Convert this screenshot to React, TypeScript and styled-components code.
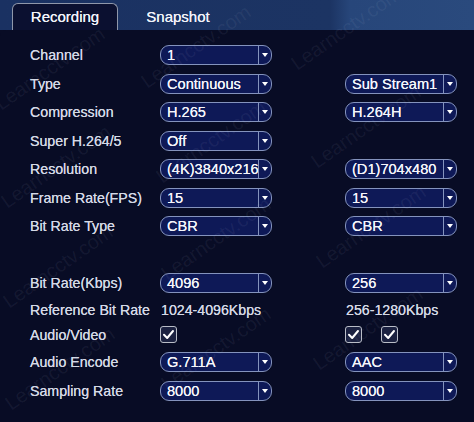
import React from "react";
import styled, { createGlobalStyle } from "styled-components";

const GlobalStyle = createGlobalStyle`
  html, body {
    margin: 0;
    padding: 0;
    background: #080c25;
  }
  * {
    box-sizing: border-box;
  }
`;

interface FieldRow {
   label?: string;
   left?: Control;
   right?: Control;
   h: number;
}

type Control =
   | { kind: "select"; value: string }
   | { kind: "text"; value: string }
   | { kind: "checks"; count: number };

const rows: FieldRow[] = [
   { label: "Channel", left: { kind: "select", value: "1" }, h: 28.5 },
   { label: "Type", left: { kind: "select", value: "Continuous" }, right: { kind: "select", value: "Sub Stream1" }, h: 28.5 },
   { label: "Compression", left: { kind: "select", value: "H.265" }, right: { kind: "select", value: "H.264H" }, h: 28.5 },
   { label: "Super H.264/5", left: { kind: "select", value: "Off" }, h: 28.5 },
   { label: "Resolution", left: { kind: "select", value: "(4K)3840x2160" }, right: { kind: "select", value: "(D1)704x480" }, h: 28.5 },
   { label: "Frame Rate(FPS)", left: { kind: "select", value: "15" }, right: { kind: "select", value: "15" }, h: 28.5 },
   { label: "Bit Rate Type", left: { kind: "select", value: "CBR" }, right: { kind: "select", value: "CBR" }, h: 28.5 },
   { h: 28.5 },
   { label: "Bit Rate(Kbps)", left: { kind: "select", value: "4096" }, right: { kind: "select", value: "256" }, h: 28.5 },
   { label: "Reference Bit Rate", left: { kind: "text", value: "1024-4096Kbps" }, right: { kind: "text", value: "256-1280Kbps" }, h: 25 },
   { label: "Audio/Video", left: { kind: "checks", count: 1 }, right: { kind: "checks", count: 2 }, h: 24 },
   { label: "Audio Encode", left: { kind: "select", value: "G.711A" }, right: { kind: "select", value: "AAC" }, h: 31 },
   { label: "Sampling Rate", left: { kind: "select", value: "8000" }, right: { kind: "select", value: "8000" }, h: 26 },
];

// faint diagonal watermark spots, kept inside the frame
const marks = [
   [4, 92], [150, 70], [300, 52],
   [10, 190], [165, 165], [320, 150],
   [12, 290], [170, 262], [325, 250],
   [14, 392], [170, 372], [322, 352],
];

function Check() {
   return (
      <CheckBox>
         <svg width="13" height="13" viewBox="0 0 13 13">
            <path d="M2 6.8 L5.2 10 L11 3" fill="none" stroke="#ffffff" strokeWidth="2" strokeLinecap="round" strokeLinejoin="round" />
         </svg>
      </CheckBox>
   );
}

function renderControl(c?: Control) {
   if (!c) return null;
   if (c.kind === "select") {
      return (
         <Select>
            <Value>{c.value}</Value>
            <Arrow>
               <Triangle />
            </Arrow>
         </Select>
      );
   }
   if (c.kind === "text") return <PlainText>{c.value}</PlainText>;
   return (
      <Checks>
         {Array.from({ length: c.count }).map((_, i) => (
            <Check key={i} />
         ))}
      </Checks>
   );
}

function App() {
   return (
      <>
         <GlobalStyle />
         <Screen>
            <TabBar>
               <Tab $active>Recording</Tab>
               <Tab>Snapshot</Tab>
            </TabBar>
            <Panel>
               {rows.map((r, i) => (
                  <Row key={i} $h={r.h}>
                     <Label>{r.label}</Label>
                     <Cell>{renderControl(r.left)}</Cell>
                     <Cell>{renderControl(r.right)}</Cell>
                  </Row>
               ))}
            </Panel>
            <Watermarks aria-hidden>
               {marks.map(([x, y], i) => (
                  <Mark key={i} style={{ left: x, top: y }}>
                     Learncctv.com
                  </Mark>
               ))}
            </Watermarks>
         </Screen>
      </>
   );
}

export default App;

const Screen = styled.div`
   position: relative;
   width: 474px;
   height: 422px;
   overflow: hidden;
   background: #080c25;
   font-family: "Liberation Sans", Arial, sans-serif;
`;

const TabBar = styled.div`
   height: 30px;
   display: flex;
   align-items: flex-end;
   padding-left: 12px;
   background: linear-gradient(
      to right,
      #1a3162 0px,
      #1c3463 330px,
      #27467a 350px,
      #2a4a7d 474px
   );
`;

const Tab = styled.div<{ $active?: boolean }>`
   width: ${(p) => (p.$active ? "106px" : "112px")};
   height: 27px;
   display: flex;
   align-items: center;
   justify-content: center;
   padding-bottom: 2px;
   font-size: 15px;
   color: #f2f4fa;
   text-shadow: 0 0 0.6px #f2f4fa;
   border-radius: 6px 6px 0 0;
   background: ${(p) => (p.$active ? "#0b1030" : "transparent")};
   border: ${(p) => (p.$active ? "1px solid #8f97aa" : "1px solid transparent")};
   border-bottom: none;
   margin-right: 4px;
`;

const Panel = styled.div`
   padding-top: 11px;
   background: #080c25;
   border-top-left-radius: 6px;
`;

const Row = styled.div<{ $h: number }>`
   height: ${(p) => p.$h}px;
   display: grid;
   grid-template-columns: 130px 185px 129px;
   align-items: center;
   padding-left: 30px;
`;

const Label = styled.div`
   font-size: 14.2px;
   color: #d4d9e6;
   text-shadow: 0 0 0.6px #d4d9e6;
   white-space: nowrap;
`;

const Cell = styled.div`
   display: flex;
   align-items: center;
`;

const Select = styled.div`
   width: 112px;
   height: 20px;
   display: flex;
   border: 1.5px solid #8493bd;
   border-radius: 9px;
   background: #0e1957;
   overflow: hidden;
`;

const Value = styled.div`
   flex: 1;
   padding-left: 6px;
   display: flex;
   align-items: center;
   font-size: 14.6px;
   color: #f5f6fb;
   text-shadow: 0 0 0.6px #f5f6fb;
   white-space: nowrap;
   overflow: hidden;
`;

const Arrow = styled.div`
   width: 13px;
   border-left: 1.5px solid #8493bd;
   display: flex;
   align-items: center;
   justify-content: center;
`;

const Triangle = styled.div`
   width: 0;
   height: 0;
   border-left: 3.5px solid transparent;
   border-right: 3.5px solid transparent;
   border-top: 4px solid #ffffff;
`;

const PlainText = styled.div`
   font-size: 14.2px;
   color: #d4d9e6;
   text-shadow: 0 0 0.6px #d4d9e6;
   white-space: nowrap;
   padding-left: 1px;
`;

const Checks = styled.div`
   display: flex;
   gap: 19px;
`;

const CheckBox = styled.div`
   width: 17px;
   height: 17px;
   border: 1.5px solid #b9bdc7;
   border-radius: 3px;
   background: #1b2140;
   display: flex;
   align-items: center;
   justify-content: center;
`;

const Watermarks = styled.div`
   position: absolute;
   inset: 0;
   pointer-events: none;
`;

const Mark = styled.span`
   position: absolute;
   font-family: "Liberation Sans", Arial, sans-serif;
   font-size: 20px;
   color: rgba(190, 200, 225, 0.08);
   transform: rotate(-35deg);
   transform-origin: left bottom;
   white-space: nowrap;
`;
